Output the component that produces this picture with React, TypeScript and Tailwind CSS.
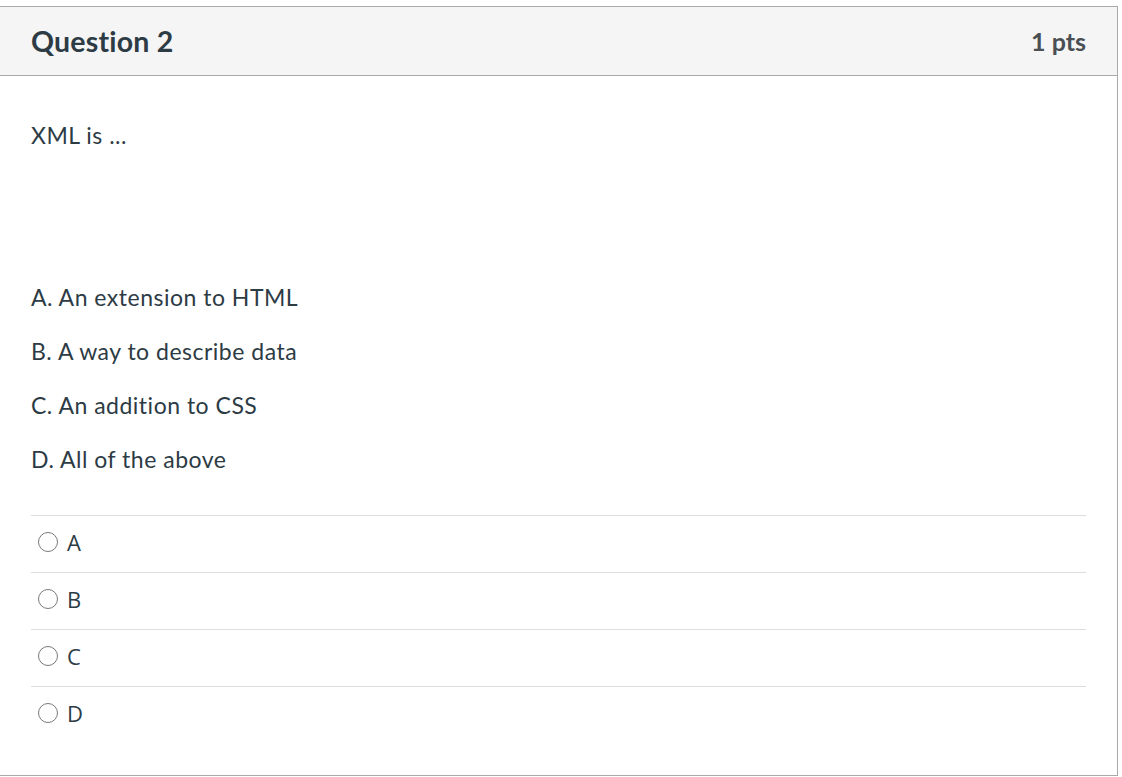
const OPTIONS = [
  "A. An extension to HTML",
  "B. A way to describe data",
  "C. An addition to CSS",
  "D. All of the above",
];

const ANSWERS = ["A", "B", "C", "D"];

export default function App() {
  return (
    <div className="min-h-[777px] bg-white pt-[6px] font-['Lato','Noto_Sans',sans-serif] text-[#2d3b45]">
      <div className="w-[1118px] border border-l-0 border-[#aaaaaa] bg-white">
        <div className="flex h-[69px] items-center justify-between border-b border-[#aaaaaa] bg-[#f5f5f5] px-[31px]">
          <h2 className="text-[28.5px] font-bold leading-none tracking-[0.2px]">Question 2</h2>
          <span className="text-[25px] font-bold leading-none text-[#4a4f53]">1 pts</span>
        </div>

        <div className="px-[31px] pb-[32px] pt-[44px]">
          <p className="text-[23px] leading-[30px] tracking-[0.5px]">XML is ...</p>

          <div className="mt-[132px] flex flex-col gap-[24px]">
            {OPTIONS.map((o) => (
              <p key={o} className="text-[23px] leading-[30px] tracking-[0.5px]">
                {o}
              </p>
            ))}
          </div>

          <div className="mt-[41px]">
            {ANSWERS.map((a) => (
              <label
                key={a}
                className="flex h-[57px] items-center border-t border-[#dddddd] pb-[4px]"
              >
                <span className="ml-[7px] h-[20px] w-[20px] shrink-0 rounded-full border-[1.5px] border-[#7a7a7a] bg-white" />
                <span className="ml-[9px] font-['Open_Sans','Liberation_Sans',sans-serif] text-[22px] leading-none">
                  {a}
                </span>
              </label>
            ))}
          </div>
        </div>
      </div>
    </div>
  );
}
